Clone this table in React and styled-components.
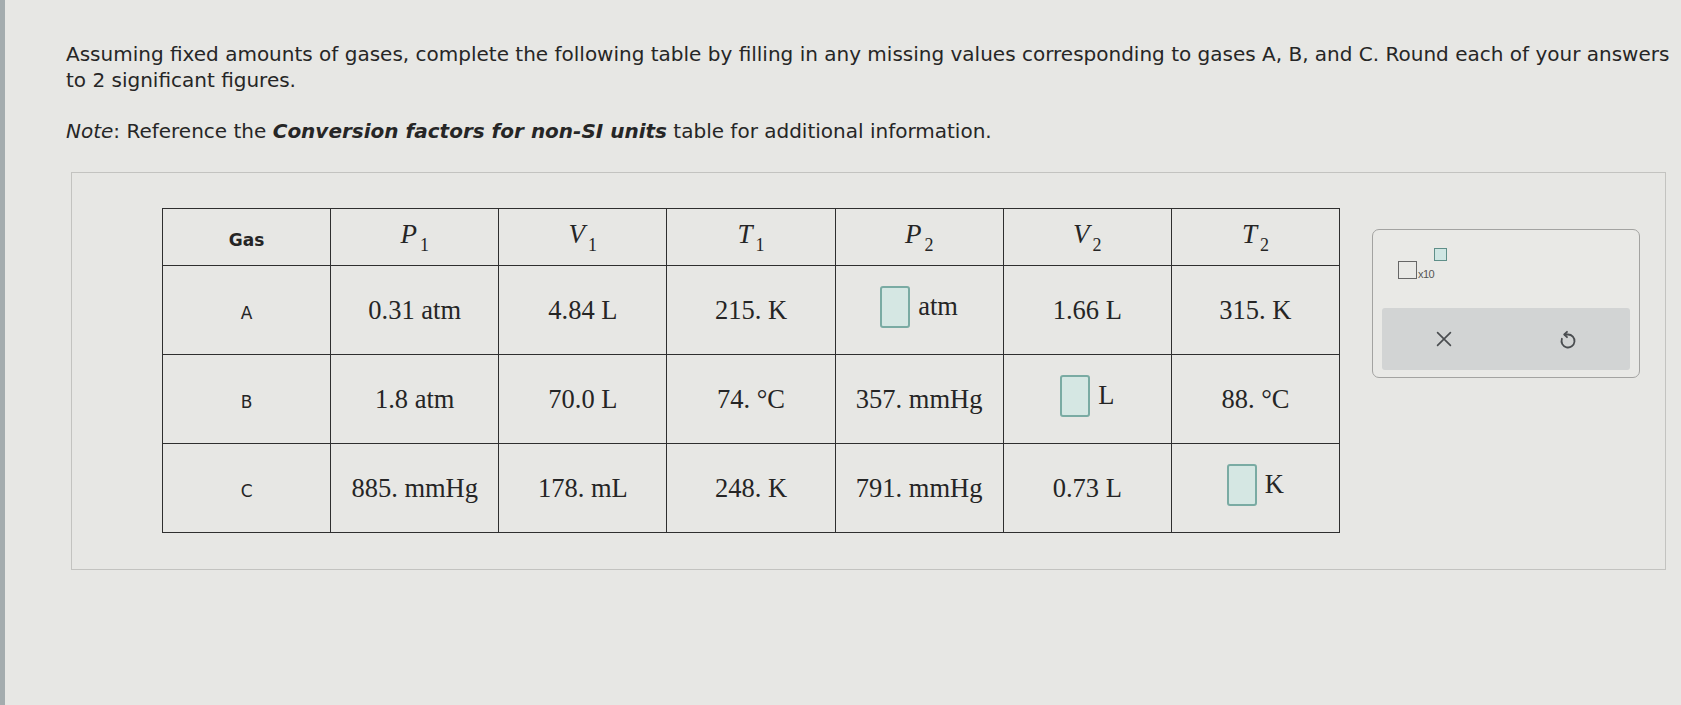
import React from "react";
import styled, { createGlobalStyle } from "styled-components";

const GlobalStyle = createGlobalStyle`
  html, body {
    margin: 0;
    padding: 0;
    background: #e7e7e4;
  }
  body {
    font-family: "DejaVu Sans", Verdana, sans-serif;
    color: #262626;
  }
`;

const rows = [
  { gas: "A", cells: ["0.31 atm", "4.84 L", "215. K", { unit: "atm" }, "1.66 L", "315. K"] },
  { gas: "B", cells: ["1.8 atm", "70.0 L", "74. °C", "357. mmHg", { unit: "L" }, "88. °C"] },
  { gas: "C", cells: ["885. mmHg", "178. mL", "248. K", "791. mmHg", "0.73 L", { unit: "K" }] },
];

const headers = [
  ["P", "1"],
  ["V", "1"],
  ["T", "1"],
  ["P", "2"],
  ["V", "2"],
  ["T", "2"],
];

const App = () => {
  return (
    <Page>
      <GlobalStyle />
      <Prompt>
        Assuming fixed amounts of gases, complete the following table by filling in any missing values
        corresponding to gases A, B, and C. Round each of your answers to 2 significant figures.
      </Prompt>
      <Note>
        <i>Note</i>: Reference the <b>Conversion factors for non-SI units</b> table for additional information.
      </Note>

      <Panel>
        <GasTable>
          <colgroup>
            {Array.from({ length: 7 }).map((_, i) => (
              <col key={i} style={{ width: 168 }} />
            ))}
          </colgroup>
          <thead>
            <tr>
              <HeadCell>
                <GasLabel bold>Gas</GasLabel>
              </HeadCell>
              {headers.map(([v, s], i) => (
                <HeadCell key={i}>
                  <Var>
                    {v}
                    <sub>{s}</sub>
                  </Var>
                </HeadCell>
              ))}
            </tr>
          </thead>
          <tbody>
            {rows.map((row) => (
              <tr key={row.gas}>
                <Cell>
                  <GasLabel>{row.gas}</GasLabel>
                </Cell>
                {row.cells.map((c, i) => (
                  <Cell key={i}>
                    {typeof c === "string" ? (
                      c
                    ) : (
                      <Blank>
                        <AnswerBox />
                        {c.unit}
                      </Blank>
                    )}
                  </Cell>
                ))}
              </tr>
            ))}
          </tbody>
        </GasTable>

        <Tools>
          <SciButton>
            <SciBase />
            <SciTimes>x10</SciTimes>
            <SciExp />
          </SciButton>
          <ActionBar>
            <IconButton aria-label="clear">
              <svg width="22" height="22" viewBox="0 0 24 24" fill="none" stroke="#4a4d50" strokeWidth="1.8" strokeLinecap="round">
                <path d="M5 5 L19 19 M19 5 L5 19" />
              </svg>
            </IconButton>
            <IconButton aria-label="undo">
              <svg width="24" height="24" viewBox="0 0 24 24" fill="none" stroke="#4a4d50" strokeWidth="1.8" strokeLinecap="round" strokeLinejoin="round">
                <path d="M8.6 7.5 L12 7.5 A6.5 6.5 0 1 1 5.9 11.8" />
                <path d="M11 4.8 L8.3 7.5 L11 10.2" />
              </svg>
            </IconButton>
          </ActionBar>
        </Tools>
      </Panel>
    </Page>
  );
};

export default App;

// Styled Components
const Page = styled.div`
  min-height: 705px;
  box-sizing: border-box;
  padding: 41px 0 0 61px;
  border-left: 5px solid #a4acae;
`;

const Prompt = styled.p`
  margin: 0;
  width: 1625px;
  font-size: 20px;
  line-height: 26px;
`;

const Note = styled.p`
  margin: 25px 0 0;
  font-size: 20px;
  line-height: 26px;

  b {
    font-weight: bold;
    font-style: italic;
  }
`;

const Panel = styled.div`
  margin: 28px 0 0 5px;
  width: 1595px;
  height: 398px;
  box-sizing: border-box;
  border: 1px solid #c3c3c0;
  padding: 35px 0 0 90px;
  display: flex;
  align-items: flex-start;
  gap: 32px;
`;

const GasTable = styled.table`
  border-collapse: collapse;
  table-layout: fixed;
  width: 1178px;
  border: 1.5px solid #2f2f2f;
  font-family: "Liberation Serif", "Times New Roman", serif;
  font-size: 26.5px;
  color: #252525;

  td,
  th {
    border: 1.5px solid #2f2f2f;
  }
`;

const HeadCell = styled.th`
  height: 56px;
  padding: 0;
  text-align: center;
  vertical-align: middle;
  font-weight: normal;
`;

const Cell = styled.td`
  height: 88px;
  padding: 0;
  text-align: center;
  vertical-align: middle;
`;

const GasLabel = styled.span`
  font-family: "DejaVu Sans", Verdana, sans-serif;
  font-size: 17px;
  font-weight: ${(p) => (p.bold ? "bold" : "normal")};
`;

const Var = styled.span`
  font-style: italic;
  font-size: 27px;

  sub {
    font-style: normal;
    font-size: 18px;
    vertical-align: -8px;
    margin-left: 3px;
  }
`;

const Blank = styled.span`
  display: inline-flex;
  align-items: center;
  gap: 8px;
`;

const AnswerBox = styled.span`
  display: inline-block;
  width: 30px;
  height: 42px;
  box-sizing: border-box;
  border: 2px solid #7aaba3;
  border-radius: 3px;
  background: #d5e7e3;
`;

const Tools = styled.div`
  margin-top: 21px;
  width: 268px;
  box-sizing: border-box;
  border: 1.5px solid #a3a3a1;
  border-radius: 7px;
  padding: 19px 9px 7px;
  background: #e9e9e6;
`;

const SciButton = styled.div`
  position: relative;
  height: 30px;
  margin-left: 16px;
  display: flex;
  align-items: flex-end;
  padding-bottom: 3px;
`;

const SciBase = styled.span`
  width: 19px;
  height: 18px;
  box-sizing: border-box;
  border: 1.5px solid #666;
`;

const SciTimes = styled.span`
  font-family: "Liberation Sans", Arial, sans-serif;
  font-size: 11px;
  color: #555;
  margin-left: 1px;
  margin-bottom: -1px;
  letter-spacing: -0.5px;
`;

const SciExp = styled.span`
  position: absolute;
  left: 36px;
  top: -1px;
  width: 13px;
  height: 13px;
  box-sizing: border-box;
  border: 1.5px solid #5f8f89;
  background: #cfe6e3;
`;

const ActionBar = styled.div`
  margin-top: 26px;
  height: 62px;
  border-radius: 3px;
  background: #d2d4d4;
  display: flex;
  align-items: center;
  justify-content: space-around;
`;

const IconButton = styled.button`
  border: none;
  background: none;
  padding: 0;
  width: 40px;
  height: 40px;
  display: flex;
  align-items: center;
  justify-content: center;
  cursor: pointer;
`;
